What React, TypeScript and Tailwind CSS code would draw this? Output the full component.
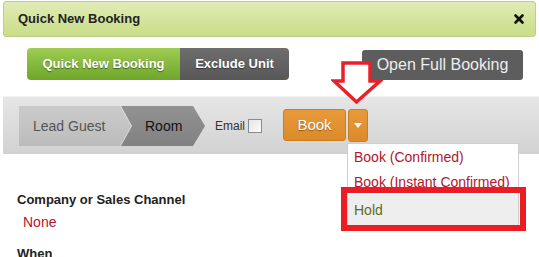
import { X } from "lucide-react";

const font = { fontFamily: '"Liberation Sans", Arial, sans-serif' };

function DownArrow() {
  return (
    <svg
      className="absolute left-[331px] top-[60px] pointer-events-none"
      width="52"
      height="45"
      viewBox="0 0 52 45"
    >
      <path
        d="M12 3 H39 V21 H49 L25.5 42 L3 21 H12 Z"
        fill="white"
        stroke="#e8202a"
        strokeWidth="3.5"
        strokeLinejoin="miter"
      />
    </svg>
  );
}

export default function App() {
  return (
    <div className="relative w-[539px] h-[257px] bg-white overflow-hidden" style={font}>
      {/* title bar */}
      <div className="mx-[3px] mt-[1px] h-[36px] flex items-center justify-between pl-[14px] pr-[9px] rounded-[3px] border border-[#bccd8c] bg-gradient-to-b from-[#e1ebb6] to-[#c9de86]">
        <span className="text-[13px] font-bold text-[#222]">Quick New Booking</span>
        <X className="w-[14px] h-[14px] text-[#111]" strokeWidth={4.5} />
      </div>

      {/* buttons row */}
      <div className="mt-[11px] h-[33px] flex items-start justify-between pl-[27px] pr-[16px]">
        <div className="flex h-[32px] rounded-[4px] overflow-hidden text-[13px] font-bold text-white [text-shadow:0_1px_1px_rgba(0,0,0,0.45)]">
          <div className="w-[153px] flex items-center justify-center bg-gradient-to-b from-[#a0cc52] to-[#6ea62a]">
            Quick New Booking
          </div>
          <div className="w-[109px] flex items-center justify-center bg-gradient-to-b from-[#6e6e6e] to-[#575757]">
            Exclude Unit
          </div>
        </div>
        <div className="mt-[2px] w-[161px] h-[30px] flex items-center justify-center rounded-[3px] bg-[#5d5d5d] text-[16px] text-[#eeeeee]">
          Open Full Booking
        </div>
      </div>

      {/* toolbar */}
      <div className="mt-[15px] ml-[3px] h-[58px] border-t border-[#f4f4f4] bg-gradient-to-b from-[#e6e6e6] to-[#d2d2d2] flex items-start pt-[9px] pl-[16px]">
        <div className="flex h-[40px]">
          <div className="w-[112px] h-[40px] flex items-center pl-[14px] text-[14px] text-[#555] bg-gradient-to-b from-[#cbcbcb] to-[#bcbcbc] [clip-path:polygon(0_0,calc(100%_-_11px)_0,100%_50%,calc(100%_-_11px)_100%,0_100%)]">
            Lead Guest
          </div>
          <div className="-ml-[10px] w-[84px] h-[40px] flex items-center pl-[24px] text-[14px] text-[#111] bg-gradient-to-b from-[#929292] to-[#818181] [clip-path:polygon(0_0,calc(100%_-_12px)_0,100%_50%,calc(100%_-_12px)_100%,0_100%,11px_50%)]">
            Room
          </div>
        </div>
        <div className="ml-[10px] h-[40px] flex items-center gap-[3px] text-[12px] text-[#333]">
          <span>Email</span>
          <span className="w-[14px] h-[14px] border border-[#8a8a8a] bg-gradient-to-br from-[#e6e6e6] to-[#fafafa]" />
        </div>
        <div className="ml-[21px] mt-[3px] flex gap-[2px]">
          <div className="w-[63px] h-[32px] flex items-center justify-center rounded-[3px] border border-[#c9801f] bg-gradient-to-b from-[#e89a3a] to-[#dc8a2a] text-[15px] text-white [text-shadow:0_1px_1px_rgba(0,0,0,0.35)]">
            Book
          </div>
          <div className="w-[20px] h-[33px] flex items-center justify-center rounded-[3px] border border-[#c9801f] bg-gradient-to-b from-[#e89a3a] to-[#dc8a2a]">
            <span className="w-0 h-0 border-l-[4px] border-r-[4px] border-t-[5px] border-l-transparent border-r-transparent border-t-white" />
          </div>
        </div>
      </div>

      {/* form content */}
      <div className="pl-[17px] pt-[36px]">
        <div className="text-[13px] font-bold text-[#222]">Company or Sales Channel</div>
        <div className="mt-[2px] ml-[6px] text-[14px] text-[#b3152d]">None</div>
        <div className="mt-[11px] text-[13px] font-bold text-[#222]">When</div>
      </div>

      <DownArrow />

      {/* dropdown menu */}
      <div className="absolute left-[347px] top-[143px] w-[172px] bg-white border border-[#cfcfcf] text-[14px]">
        <div className="h-[26px] flex items-center pl-[6px] text-[#b3152d]">Book (Confirmed)</div>
        <div className="h-[25px] flex items-center pl-[6px] text-[#b3152d]">Book (Instant Confirmed)</div>
        <div className="h-[30px] flex items-center pl-[6px] bg-[#eeeeee] text-[#5f6a22]">Hold</div>
      </div>

      {/* highlight box */}
      <div className="absolute left-[341px] top-[187px] w-[185px] h-[44px] border-[6px] border-[#ec1c24] pointer-events-none" />
    </div>
  );
}
